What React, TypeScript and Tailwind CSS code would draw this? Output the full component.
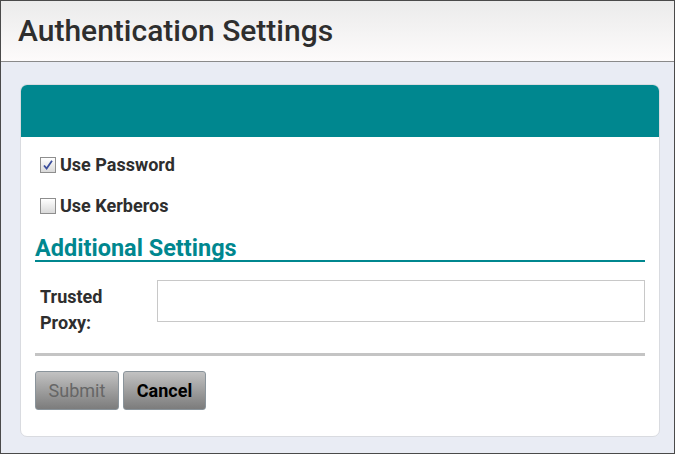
import React from "react";

const font = { fontFamily: "Roboto, 'Liberation Sans', sans-serif" };

const Checkbox: React.FC<{ checked?: boolean; label: string; className?: string }> = ({ checked, label, className }) => (
    <label className={`flex h-[16px] items-center pl-[5px] ${className ?? ""}`}>
        <span className="flex h-[16px] w-[16px] items-center justify-center border border-[#8e8e8e] bg-gradient-to-b from-[#ffffff] to-[#d9d9d9]">
            {checked && (
                <svg width="12" height="12" viewBox="0 0 12 12">
                    <path d="M2 6.5 L4.6 9.5 L10 1.8" fill="none" stroke="#3b4e9c" strokeWidth="1.8" />
                </svg>
            )}
        </span>
        <span className="ml-[4px] text-[18px] font-bold leading-[16px] text-[#2e2e2e]">{label}</span>
    </label>
);

export default function App() {
    return (
        <div className="flex h-[454px] w-[675px] flex-col border border-[#4a4a4a] bg-[#e9ecf4]" style={font}>
            <div className="h-[61px] border-b border-[#8a8a8a] bg-gradient-to-b from-[#ebebeb] to-[#fdfbfb] pl-[17px]">
                <h1 className="text-[30px] font-medium leading-[60px] text-[#2e2e2e]">Authentication Settings</h1>
            </div>
            <div className="pl-[19px] pr-[14px] pt-[22px]">
                <div className="overflow-hidden rounded-[7px] border border-[#d9dbe0] bg-white">
                    <div className="h-[52px] bg-[#00878f]" />
                    <div className="px-[14px] pb-[26px]">
                        <Checkbox checked label="Use Password" className="mt-[20px]" />
                        <Checkbox label="Use Kerberos" className="mt-[25px]" />
                        <h2 className="mt-[22px] border-b-2 border-[#00878f] text-[23.5px] font-bold leading-[24px] text-[#00878f]">
                            Additional Settings
                        </h2>
                        <div className="mt-[18px] flex">
                            <div className="mt-[4px] w-[122px] pl-[5px] text-[18px] font-bold leading-[26px] text-[#2e2e2e]">
                                Trusted
                                <br />
                                Proxy:
                            </div>
                            <input
                                type="text"
                                className="h-[42px] flex-1 border border-[#c8c8c8] bg-white px-2 outline-none"
                            />
                        </div>
                        <div className="mt-[17px] h-[3px] bg-[#c4c4c4]" />
                        <div className="mt-[15px] flex gap-[4px]">
                            <button className="h-[39px] w-[84px] rounded-[3px] border border-[#8a949b] bg-gradient-to-b from-[#c2c2c2] to-[#7c7c7c] text-[18px] text-[#666]">
                                Submit
                            </button>
                            <button className="h-[39px] w-[83px] rounded-[3px] border border-[#8a949b] bg-gradient-to-b from-[#c2c2c2] to-[#7c7c7c] text-[18px] font-bold text-black">
                                Cancel
                            </button>
                        </div>
                    </div>
                </div>
            </div>
        </div>
    );
}
